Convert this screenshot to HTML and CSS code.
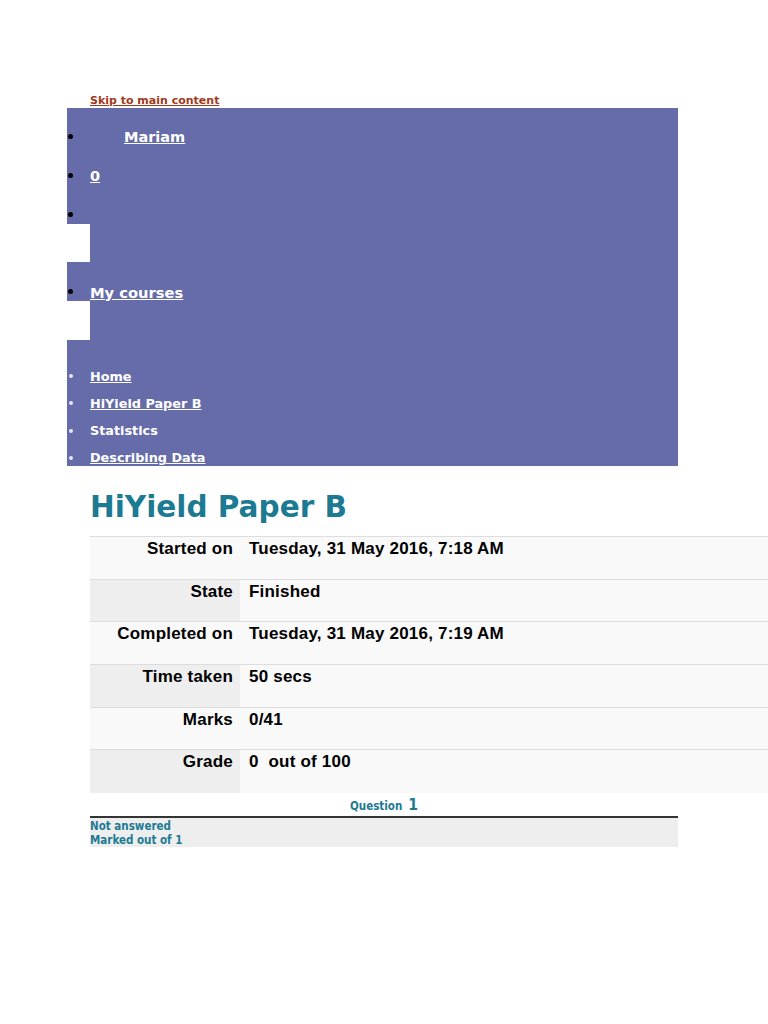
FILE: index.html
```html
<!DOCTYPE html>
<html>
<head>
<meta charset="utf-8">
<link rel="stylesheet" href="styles.css">
</head>
<body>
<div class="page">
  <a class="skip" href="#main">Skip to main content</a>
  <nav class="nav">
    <div class="row big first"><span class="dot"></span><a class="user" href="#">Mariam</a></div>
    <div class="row big"><span class="dot"></span><a href="#">0</a></div>
    <div class="row big"><span class="dot"></span></div>
    <div class="notch"></div>
    <div class="row big after-notch"><span class="dot"></span><a href="#">My courses</a></div>
    <div class="notch notch2"></div>
    <ul class="crumbs">
      <li><span class="wdot"></span><a href="#">Home</a></li>
      <li><span class="wdot"></span><a href="#">HiYield Paper B</a></li>
      <li><span class="wdot"></span><span class="plain">Statistics</span></li>
      <li><span class="wdot"></span><a href="#">Describing Data</a></li>
    </ul>
  </nav>
  <main id="main" class="main">
    <h1 class="title">HiYield Paper B</h1>
    <table class="summary">
      <tr class="odd"><th>Started on</th><td>Tuesday, 31 May 2016, 7:18 AM</td></tr>
      <tr class="even"><th>State</th><td>Finished</td></tr>
      <tr class="odd"><th>Completed on</th><td>Tuesday, 31 May 2016, 7:19 AM</td></tr>
      <tr class="even"><th>Time taken</th><td>50 secs</td></tr>
      <tr class="odd"><th>Marks</th><td>0/41</td></tr>
      <tr class="even"><th>Grade</th><td>0&nbsp; out of 100</td></tr>
    </table>
    <div class="question">
      <div class="qhead"><span class="qword">Question</span> <span class="qnum">1</span></div>
      <div class="qinfo">
        <div>Not answered</div>
        <div>Marked out of 1</div>
      </div>
    </div>
  </main>
</div>
</body>
</html>
```
FILE: styles.css
```css
html, body {
  margin: 0;
  padding: 0;
  background: #ffffff;
}
body {
  font-family: "DejaVu Sans", Verdana, sans-serif;
  overflow-x: hidden;
}
.page {
  padding-top: 93px;
  width: 768px;
}
.skip {
  display: block;
  margin-left: 90px;
  height: 15px;
  line-height: 15px;
  font-size: 11px;
  font-weight: bold;
  color: #a0391b;
  text-decoration: underline;
}
.nav {
  margin-left: 67px;
  width: 611px;
  background: #666ca9;
  padding-top: 18px;
}
.nav a {
  color: #ffffff;
  font-weight: bold;
  text-decoration: underline;
}
.row {
  display: flex;
  align-items: center;
  height: 20px;
  margin-bottom: 19px;
  font-size: 14.5px;
}
.row a { position: relative; top: 1px; }
.row:nth-child(3) { margin-bottom: 0; }
.row.after-notch { margin-top: 20px; margin-bottom: 0; height: 19px; font-size: 14.7px; }
.dot {
  width: 5px;
  height: 5px;
  border-radius: 50%;
  background: #000;
  margin-left: 1px;
  margin-right: 17px;
  flex: none;
}
.user { margin-left: 34px; }
.notch {
  height: 38px;
  background: #ffffff;
  width: 23px;
}
.notch2 { height: 39px; }
.crumbs {
  list-style: none;
  margin: 0;
  padding: 28px 0 0 0;
  font-size: 12.8px;
}
.crumbs li {
  display: flex;
  align-items: center;
  height: 16px;
  margin-bottom: 11.3px;
}
.crumbs li:last-child { margin-bottom: 0; }
.wdot {
  width: 4px;
  height: 4px;
  border-radius: 50%;
  background: #e8e8f4;
  margin-left: 2px;
  margin-right: 17px;
  flex: none;
}
.plain {
  color: #ffffff;
  font-weight: bold;
}
.main {
  margin-left: 90px;
}
.title {
  margin: 20px 0 0 0;
  height: 50px;
  line-height: 42px;
  font-size: 29.5px;
  font-weight: bold;
  color: #1c7a93;
}
.summary {
  border-collapse: collapse;
  width: 678px;
  font-family: "Liberation Sans", Arial, sans-serif;
  font-size: 17px;
  letter-spacing: 0.2px;
  font-weight: bold;
  color: #000;
}
.summary th, .summary td {
  height: 42.7px;
  vertical-align: top;
  padding: 2px 0 0 0;
  line-height: 20px;
  border-top: 1px solid #dddddd;
  background: #f9f9f9;
  box-sizing: border-box;
}
.summary th {
  width: 150px;
  text-align: right;
  padding-right: 7px;
}
.summary td {
  text-align: left;
  padding-left: 9px;
}
.summary tr.even th { background: #eeeeee; }
.question {
  width: 588px;
  font-family: "DejaVu Sans Condensed", "DejaVu Sans", sans-serif;
  font-weight: bold;
  color: #1c7a93;
}
.qhead {
  text-align: center;
  line-height: 24px;
  border-bottom: 2px solid #333;
  box-sizing: border-box;
  height: 25px;
}
.qword { font-size: 11.5px; }
.qnum { font-size: 15.5px; margin-left: 1px; }
.qinfo {
  background: #eeeeee;
  height: 29px;
  font-size: 11.5px;
  line-height: 14.5px;
  padding-top: 1px;
  box-sizing: border-box;
}
```
